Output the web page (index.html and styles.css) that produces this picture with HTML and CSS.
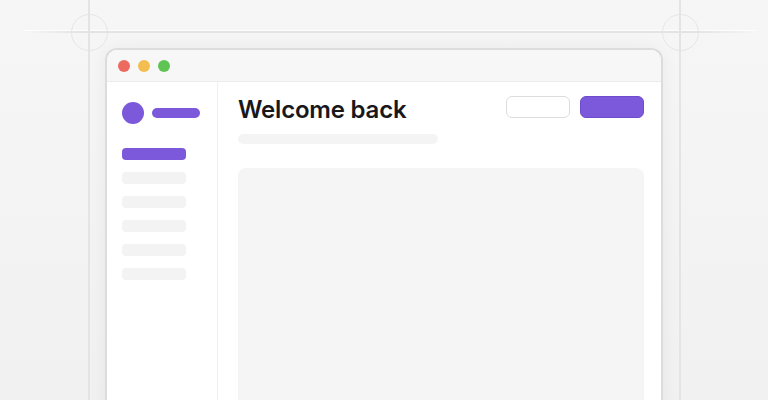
FILE: index.html
```html
<!DOCTYPE html>
<html lang="en">
<head>
<meta charset="utf-8">
<title>Welcome back</title>
<link rel="stylesheet" href="styles.css">
</head>
<body>
<div class="guides" aria-hidden="true">
  <div class="guide-h"></div>
  <div class="guide-v guide-v-left"></div>
  <div class="guide-v guide-v-right"></div>
  <div class="guide-ring guide-ring-left"></div>
  <div class="guide-ring guide-ring-right"></div>
</div>
<div class="stage">
  <div class="window">
    <div class="titlebar">
      <span class="dot dot-red"></span>
      <span class="dot dot-yellow"></span>
      <span class="dot dot-green"></span>
    </div>
    <div class="app">
      <aside class="sidebar">
        <div class="brand">
          <span class="brand-mark"></span>
          <span class="brand-name"></span>
        </div>
        <nav class="nav">
          <span class="nav-item nav-item-active"></span>
          <span class="nav-item"></span>
          <span class="nav-item"></span>
          <span class="nav-item"></span>
          <span class="nav-item"></span>
          <span class="nav-item"></span>
        </nav>
      </aside>
      <main class="main">
        <div class="header">
          <div class="heading">
            <h1 class="title">Welcome back</h1>
            <div class="subtitle"></div>
          </div>
          <div class="actions">
            <span class="btn btn-outline"></span>
            <span class="btn btn-primary"></span>
          </div>
        </div>
        <div class="card"></div>
      </main>
    </div>
  </div>
</div>
</body>
</html>
```
FILE: styles.css
```css
* { box-sizing: border-box; }

html, body {
  margin: 0;
  padding: 0;
}

body {
  width: 768px;
  height: 400px;
  overflow: hidden;
  position: relative;
  background: linear-gradient(180deg, #f6f6f6 0%, #f1f1f1 100%);
  font-family: Inter, "Noto Sans", "Liberation Sans", sans-serif;
}

.guides {
  position: absolute;
  inset: 0;
  pointer-events: none;
}

.guide-h {
  position: absolute;
  left: 24px;
  right: 12px;
  top: 31px;
  height: 2px;
  background: linear-gradient(90deg, rgba(225,225,225,0) 0%, #e3e3e3 8%, #e3e3e3 92%, rgba(225,225,225,0) 100%);
  box-shadow: 0 -1px 0 rgba(255,255,255,0.8);
}

.guide-v {
  position: absolute;
  top: 0;
  bottom: 0;
  width: 2px;
  background: #e4e4e4;
}
.guide-v-left { left: 88px; }
.guide-v-right { left: 679px; }

.guide-ring {
  position: absolute;
  top: 14px;
  width: 37px;
  height: 37px;
  border: 1px solid #e6e6e6;
  border-radius: 50%;
}
.guide-ring-left { left: 71px; }
.guide-ring-right { left: 662px; }

.stage {
  position: relative;
  padding: 48px 0 0 105px;
}

.window {
  width: 558px;
  height: 372px;
  background: #fff;
  border: 2px solid #dcdcdc;
  border-bottom: none;
  border-radius: 12px 12px 0 0;
  overflow: hidden;
  box-shadow: 0 0 18px rgba(0,0,0,0.05);
  display: flex;
  flex-direction: column;
}

.titlebar {
  height: 32px;
  flex: none;
  background: #f7f7f7;
  border-bottom: 1px solid #ebebeb;
  display: flex;
  align-items: center;
  gap: 8px;
  padding-left: 11px;
}

.dot {
  width: 12px;
  height: 12px;
  border-radius: 50%;
}
.dot-red { background: #ec6a5f; }
.dot-yellow { background: #f3bd4f; }
.dot-green { background: #5fc454; }

.app {
  flex: 1;
  display: flex;
  min-height: 0;
}

.sidebar {
  width: 111px;
  flex: none;
  border-right: 1px solid #f0f0f0;
  padding: 20px 0 0 15px;
}

.brand {
  display: flex;
  align-items: center;
  gap: 8px;
}

.brand-mark {
  width: 22px;
  height: 22px;
  border-radius: 50%;
  background: #7c58da;
}

.brand-name {
  width: 48px;
  height: 10px;
  border-radius: 5px;
  background: #7c58da;
}

.nav {
  margin-top: 24px;
  display: flex;
  flex-direction: column;
  gap: 12px;
}

.nav-item {
  width: 64px;
  height: 12px;
  border-radius: 4px;
  background: #f3f3f3;
}

.nav-item-active {
  background: #7c58da;
}

.main {
  flex: 1;
  padding: 14px 17px 0 20px;
  display: flex;
  flex-direction: column;
}

.header {
  display: flex;
  justify-content: space-between;
  align-items: flex-start;
}

.title {
  margin: 0;
  font-size: 24px;
  line-height: 28px;
  font-weight: 600;
  color: #18181b;
  letter-spacing: -0.2px;
}

.subtitle {
  margin-top: 10px;
  width: 200px;
  height: 10px;
  border-radius: 5px;
  background: #f4f4f4;
}

.actions {
  display: flex;
  gap: 10px;
}

.btn {
  width: 64px;
  height: 22px;
  border-radius: 6px;
}

.btn-outline {
  background: #fff;
  border: 1px solid #dcdcdc;
}

.btn-primary {
  background: #7c58da;
  border: 1px solid #6f4ccc;
}

.card {
  margin-top: 24px;
  flex: 1;
  border-radius: 8px;
  background: #f5f5f5;
}
```
